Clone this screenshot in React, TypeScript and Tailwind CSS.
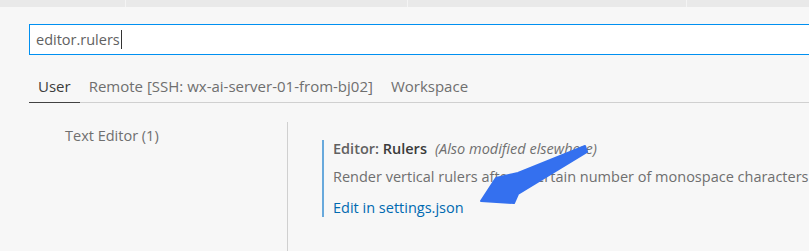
import React from "react";

export default function App() {
  return (
    <div className="relative w-[809px] h-[251px] overflow-hidden bg-[#f7f7f7] font-['Open_Sans',sans-serif] flex flex-col">
      {/* top strip */}
      <div className="h-[7px] flex bg-[#e9e9e9] shrink-0">
        <div className="w-[126px] border-r border-[#f4f4f4]" />
        <div className="w-[282px] border-r border-[#f4f4f4]" />
        <div className="w-[279px] border-r border-[#f4f4f4]" />
        <div className="flex-1" />
      </div>

      {/* search */}
      <div className="pt-[17px] pl-[29px] shrink-0">
        <div className="w-[800px] h-[31px] border border-[#0090f1] bg-white flex items-center pl-[6px]">
          <span className="text-[14.5px] text-[#616161] leading-[20px]">editor.rulers</span>
          <span className="w-px h-[19px] bg-[#333] ml-px" />
        </div>
      </div>

      {/* tabs */}
      <div className="ml-[29px] mt-[13px] flex border-b border-[#d0d0d0] shrink-0">
        <div className="px-[9px] pt-[8px] pb-[6px] text-[15px] leading-[20px] text-[#3c3c3c] border-b border-[#424242] -mb-px">
          User
        </div>
        <div className="px-[9px] pt-[8px] pb-[6px] text-[15px] leading-[20px] text-[#6f6f6f]">
          Remote [SSH: wx-ai-server-01-from-bj02]
        </div>
        <div className="px-[9px] pt-[8px] pb-[6px] text-[15px] leading-[20px] text-[#6f6f6f]">
          Workspace
        </div>
      </div>

      {/* body */}
      <div className="flex flex-1 mt-[19px]">
        <div className="w-[288px] border-r border-[#d0d0d0] shrink-0 pl-[65px] pt-[4px]">
          <div className="text-[14.5px] leading-[20px] text-[#6f6f6f]">Text Editor (1)</div>
        </div>
        <div className="flex-1 pl-[34px] pt-[18px] min-w-0">
          <div className="border-l-2 border-[#68a9dc] pl-[9px] whitespace-nowrap">
            <div className="text-[14.5px] leading-[17px] text-[#616161]">
              <span className="font-semibold">Editor: </span>
              <span className="font-semibold text-[#3b3b3b]">Rulers</span>
              <span className="italic text-[#6f6f6f] ml-[8px]">(Also modified elsewhere)</span>
            </div>
            <div className="mt-[10px] text-[14.5px] leading-[20px] text-[#6f6f6f]">
              Render vertical rulers after a certain number of monospace characters.
            </div>
            <div className="mt-[12px] text-[14.5px] leading-[18px] text-[#006ab1]">Edit in settings.json</div>
          </div>
        </div>
      </div>

      {/* annotation arrow */}
      <svg className="absolute left-0 top-0 pointer-events-none" width="809" height="251" viewBox="0 0 809 251">
        <path
          d="M585 146 L518 173 L496 178 L481 201 L514 203 L518 194 L587 152 Z"
          fill="#3470ef"
          stroke="#3470ef"
          strokeWidth="2"
          strokeLinejoin="round"
        />
      </svg>
    </div>
  );
}
